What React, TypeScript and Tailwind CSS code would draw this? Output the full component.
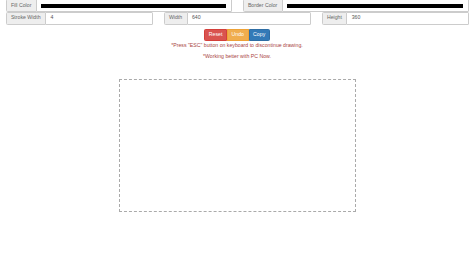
import React from "react";

function Field({ label, value, color }: { label: string; value?: string; color?: boolean }) {
  return (
    <div className="flex h-[12.6px] w-full">
      <span className="flex items-center px-[4.4px] bg-[#eeeeee] border border-[#cccccc] rounded-l-[1.5px] text-[#666666] text-[5.2px] whitespace-nowrap">
        {label}
      </span>
      <div className="flex-1 flex items-center px-[4.4px] border border-l-0 border-[#cccccc] rounded-r-[1.5px] bg-white text-[#555555] text-[5.2px]">
        {color ? <div className="w-full h-[4px] bg-black" /> : value}
      </div>
    </div>
  );
}

export default function App() {
  return (
    <div className="w-[474px] h-[266px] bg-white font-['Liberation_Sans',Arial,sans-serif] px-[5.5px] overflow-hidden">
      <div className="grid grid-cols-2 gap-x-[11px] -mt-[0.8px]">
        <Field label="Fill Color" color />
        <Field label="Border Color" color />
      </div>
      <div className="grid grid-cols-3 gap-x-[11px] mt-[0.2px]">
        <Field label="Stroke Width" value="4" />
        <Field label="Width" value="640" />
        <Field label="Height" value="360" />
      </div>
      <div className="flex justify-center mt-[4px]">
        <button className="h-[12.6px] px-[3.6px] bg-[#d9534f] border border-[#d43f3a] text-white text-[5.2px] rounded-l-[1.5px]">Reset</button>
        <button className="h-[12.6px] px-[3.6px] bg-[#f0ad4e] border border-[#eea236] text-white text-[5.2px]">Undo</button>
        <button className="h-[12.6px] px-[3.6px] bg-[#337ab7] border border-[#2e6da4] text-white text-[5.2px] rounded-r-[1.5px]">Copy</button>
      </div>
      <p className="text-center text-[#a94442] text-[5.2px] leading-[7.4px] mt-[0.5px]">
        *Press "ESC" button on keyboard to discontinue drawing.
      </p>
      <p className="text-center text-[#a94442] text-[5.2px] leading-[7.4px] mt-[3.6px]">
        *Working better with PC Now.
      </p>
      <div className="flex justify-center mt-[19px]">
        <div className="w-[237px] h-[133px] border-[1.5px] border-dashed border-[#aaaaaa] bg-white" />
      </div>
    </div>
  );
}
